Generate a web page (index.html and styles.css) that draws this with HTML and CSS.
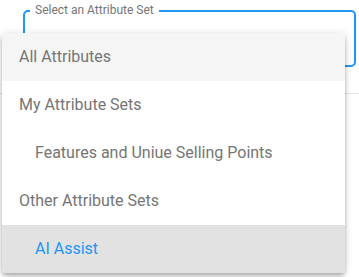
FILE: index.html
```html
<!DOCTYPE html>
<html lang="en">

<head>
    <meta charset="UTF-8">
    <meta name="viewport" content="width=device-width, initial-scale=1.0">
    <title>Attribute Set</title>
    <link rel="stylesheet" href="styles.css">
</head>

<body>
    <div class="page">
        <div class="field">
            <span class="field-label">Select an Attribute Set</span>
        </div>
        <div class="divider"></div>

        <ul class="menu">
            <li class="menu-item selected">All Attributes</li>
            <li class="menu-item">My Attribute Sets</li>
            <li class="menu-item sub">Features and Uniue Selling Points</li>
            <li class="menu-item">Other Attribute Sets</li>
            <li class="menu-item sub active">AI Assist</li>
        </ul>
    </div>
</body>

</html>
```

FILE: styles.css
```css
body {
    font-family: Roboto, "Noto Sans", sans-serif;
    margin: 0;
    padding: 0;
    background-color: #fff;
}

.page {
    position: relative;
    width: 359px;
    height: 277px;
    overflow: hidden;
}

.field {
    position: relative;
    margin: 10px 0 0 23px;
    width: 329px;
    height: 53px;
    border: 2px solid #2196f3;
    border-radius: 5px;
}

.field-label {
    position: absolute;
    top: -9px;
    left: 5px;
    padding: 0 5px;
    background-color: #fff;
    color: #757575;
    font-size: 12px;
    line-height: 14px;
}

.divider {
    margin-top: 26px;
    height: 1px;
    background-color: #e4e4e4;
}

.menu {
    position: absolute;
    top: 33px;
    left: 2px;
    width: 343px;
    margin: 0;
    padding: 0;
    list-style: none;
    background-color: #fff;
    border-radius: 4px;
    box-shadow: 0 2px 4px -1px rgba(0, 0, 0, 0.2), 0 4px 5px 0 rgba(0, 0, 0, 0.14), 0 1px 10px 0 rgba(0, 0, 0, 0.12);
    overflow: hidden;
}

.menu-item {
    height: 48px;
    line-height: 48px;
    padding-left: 17px;
    color: #757575;
    font-size: 16px;
}

.menu-item.sub {
    padding-left: 33px;
}

.menu-item.selected {
    background-color: #f5f5f5;
}

.menu-item.active {
    background-color: #e2e2e2;
    color: #2196f3;
}
```
